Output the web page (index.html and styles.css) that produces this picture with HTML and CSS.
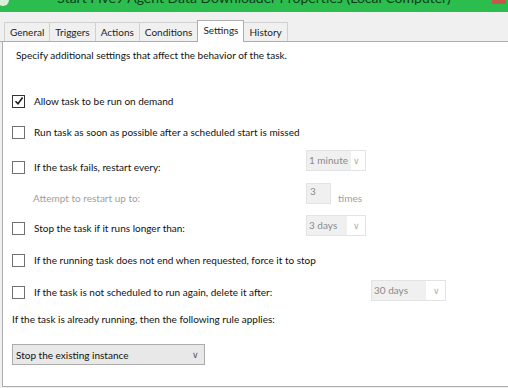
FILE: index.html
```html
<html lang="en">
<head>
    <meta charset="UTF-8">
    <title>Task Properties</title>
    <link rel="stylesheet" href="styles.css">
</head>
<body>
    <div class="window">
        <div class="titlebar">
            <span class="app-icon"></span>
            <span class="title">Start Five9 Agent Data Downloader Properties (Local Computer)</span>
            <span class="close"></span>
        </div>
        <div class="tabs">
            <div class="tab">General</div>
            <div class="tab">Triggers</div>
            <div class="tab">Actions</div>
            <div class="tab">Conditions</div>
            <div class="tab active">Settings</div>
            <div class="tab">History</div>
        </div>
        <div class="panel">
            <div class="intro">Specify additional settings that affect the behavior of the task.</div>

            <div class="row r-demand">
                <span class="check checked">
                    <svg width="10" height="10" viewBox="0 0 10 10"><path d="M1.5 5.2 L4 7.8 L8.6 1.6" fill="none" stroke="#1a1a1a" stroke-width="1.6"/></svg>
                </span>
                <span class="label">Allow task to be run on demand</span>
            </div>

            <div class="row r-missed">
                <span class="check"></span>
                <span class="label">Run task as soon as possible after a scheduled start is missed</span>
            </div>

            <div class="row r-fails">
                <span class="check"></span>
                <span class="label">If the task fails, restart every:</span>
                <div class="combo combo-minute"><span class="value">1 minute</span><span class="arrow">&#x2228;</span></div>
            </div>

            <div class="row r-attempt">
                <span class="label muted">Attempt to restart up to:</span>
                <div class="spin">3</div>
                <span class="times">times</span>
            </div>

            <div class="row r-longer">
                <span class="check"></span>
                <span class="label">Stop the task if it runs longer than:</span>
                <div class="combo combo-days"><span class="value">3 days</span><span class="arrow">&#x2228;</span></div>
            </div>

            <div class="row r-force">
                <span class="check"></span>
                <span class="label">If the running task does not end when requested, force it to stop</span>
            </div>

            <div class="row r-delete">
                <span class="check"></span>
                <span class="label">If the task is not scheduled to run again, delete it after:</span>
                <div class="combo combo-delete"><span class="value">30 days</span><span class="arrow">&#x2228;</span></div>
            </div>

            <div class="rule-text">If the task is already running, then the following rule applies:</div>

            <div class="select">
                <span>Stop the existing instance</span>
                <span class="arrow">&#x2228;</span>
            </div>
        </div>
    </div>
</body>
</html>
```

FILE: styles.css
```css
body {
    margin: 0;
    background-color: #f0f0f0;
    font-family: Lato, "Open Sans", sans-serif;
    font-size: 10px;
    color: #111111;
}
.window {
    width: 508px;
    height: 388px;
    overflow: hidden;
}
.titlebar {
    height: 12px;
    background-color: #2bbd4e;
    display: flex;
    justify-content: center;
    align-items: flex-end;
    overflow: hidden;
    position: relative;
}
.title {
    font-size: 14px;
    line-height: 18px;
    margin-bottom: 5px;
    color: #103a1a;
    white-space: nowrap;
}
.app-icon {
    position: absolute;
    left: -3px;
    top: -6px;
    width: 12px;
    height: 12px;
    border-radius: 50%;
    background-color: #d9efd9;
}
.close {
    position: absolute;
    right: 2px;
    top: -4px;
    width: 14px;
    height: 8px;
    background-color: #c9564a;
}
.tabs {
    display: flex;
    align-items: flex-end;
    padding: 9px 0 0 4px;
    height: 20px;
    border-bottom: 1px solid #adadad;
}
.tab {
    height: 18px;
    line-height: 18px;
    padding: 0 5px;
    border: 1px solid #d0d0d0;
    border-bottom: none;
    margin-right: -1px;
    background-color: #f0f0f0;
    color: #1e1e1e;
}
.tab.active {
    height: 21px;
    line-height: 19px;
    margin-bottom: -1px;
    background-color: #ffffff;
    border-color: #adadad;
    position: relative;
    z-index: 1;
    padding: 0 5px;
}
.panel {
    background-color: #ffffff;
    margin-left: 2px;
    border-left: 1px solid #adadad;
    border-bottom: 1px solid #adadad;
    height: 344px;
    position: relative;
}
.intro {
    padding: 6px 0 0 13px;
    line-height: 14px;
}
.row {
    display: flex;
    align-items: center;
    height: 16px;
    padding-left: 9px;
}
.r-demand { margin-top: 31px; }
.r-missed { margin-top: 15px; }
.r-fails { margin-top: 19px; }
.r-attempt { margin-top: 15px; }
.r-longer { margin-top: 14px; }
.r-force { margin-top: 16px; }
.r-delete { margin-top: 16px; }
.check {
    width: 11px;
    height: 11px;
    border: 1px solid #707070;
    background-color: #ffffff;
    display: flex;
    align-items: center;
    justify-content: center;
    flex-shrink: 0;
}
.check.checked {
    border-color: #333333;
}
.label {
    margin-left: 9px;
    white-space: nowrap;
}
.muted {
    color: #a0a0a0;
    margin-left: 21px;
}
.combo {
    position: absolute;
    display: flex;
    align-items: center;
    height: 21px;
    border: 1px solid #e3e3e3;
    background-color: #ffffff;
    color: #8a8a8a;
    box-sizing: border-box;
    white-space: nowrap;
}
.combo .value {
    background-color: #f0f0f0;
    height: 19px;
    line-height: 19px;
    padding-left: 2px;
    box-sizing: border-box;
}
.combo .arrow {
    color: #b0b0b0;
    font-size: 9px;
    margin-left: auto;
    margin-right: 5px;
}
.combo-minute {
    left: 303px;
    top: 108px;
    width: 60px;
}
.combo-minute .value {
    width: 44px;
}
.combo-days {
    left: 303px;
    top: 173px;
    width: 60px;
}
.combo-days .value {
    width: 40px;
}
.combo-delete {
    left: 368px;
    top: 238px;
    width: 75px;
}
.combo-delete .value {
    width: 54px;
}
.spin {
    position: absolute;
    left: 303px;
    top: 141px;
    width: 25px;
    height: 21px;
    box-sizing: border-box;
    border: 1px solid #e3e3e3;
    background-color: #f0f0f0;
    color: #8a8a8a;
    padding: 1px 0 0 3px;
}
.times {
    position: absolute;
    left: 335px;
    top: 150px;
    color: #a0a0a0;
}
.rule-text {
    margin-top: 12px;
    padding-left: 9px;
    line-height: 14px;
}
.select {
    margin: 18px 0 0 9px;
    width: 193px;
    height: 21px;
    box-sizing: border-box;
    border: 1px solid #acacac;
    background-color: #e8e8e8;
    display: flex;
    align-items: center;
    padding: 0 5px 0 3px;
}
.select .arrow {
    margin-left: auto;
    font-size: 9px;
    color: #555555;
}
```
